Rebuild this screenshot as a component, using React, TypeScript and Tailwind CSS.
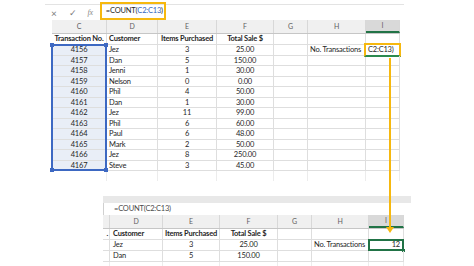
import React from "react";

const sales = [
  { id: "4156", name: "Jez", items: "3", total: "25.00" },
  { id: "4157", name: "Dan", items: "5", total: "150.00" },
  { id: "4158", name: "Jenni", items: "1", total: "30.00" },
  { id: "4159", name: "Nelson", items: "0", total: "0.00" },
  { id: "4160", name: "Phil", items: "4", total: "50.00" },
  { id: "4161", name: "Dan", items: "1", total: "30.00" },
  { id: "4162", name: "Jez", items: "11", total: "99.00" },
  { id: "4163", name: "Phil", items: "6", total: "60.00" },
  { id: "4164", name: "Paul", items: "6", total: "48.00" },
  { id: "4165", name: "Mark", items: "2", total: "50.00" },
  { id: "4166", name: "Jez", items: "8", total: "250.00" },
  { id: "4167", name: "Steve", items: "3", total: "45.00" },
];

const topCols = "grid grid-cols-[55px_51px_59px_57px_34px_58px_34px]";
const bottomCols = "grid grid-cols-[7px_53px_57px_58px_34px_57px_35px]";
const cell = "border-r border-b border-[#dedede] overflow-visible whitespace-nowrap leading-none flex items-center";

function ColHeaders({ cols, letters }: { cols: string; letters: string[] }) {
  return (
    <div className={`${cols} h-[14px] bg-[#f0f0f0] border-b border-[#c6c6c6] text-[#5f5f5f]`}>
      {letters.map((l, i) => (
        <div
          key={i}
          className={`flex items-center justify-center border-r border-[#d8d8d8] text-[7px] ${
            l === "I" ? "bg-[#d9d9d9] border-b-2 border-b-[#217346]" : ""
          }`}
        >
          {l}
        </div>
      ))}
    </div>
  );
}

export default function App() {
  return (
    <div className="relative w-[474px] h-[266px] overflow-hidden bg-white text-[#262626] font-['Lato','Liberation_Sans',sans-serif] text-[7.5px] tracking-[-0.2px]">
      {/* top sheet */}
      <div className="pl-[45px] pt-[4px] w-[404px]">
        <div className="border-t border-[#e3e3e3] h-[16px] flex items-center">
          <span className="ml-[6px] text-[#7a7a7a] text-[10px] leading-none">×</span>
          <span className="ml-[12px] text-[#7a7a7a] text-[9px] leading-none">✓</span>
          <span className="ml-[11px] text-[#8a8a8a] text-[8px] italic font-['Liberation_Serif',serif] leading-none">fx</span>
          <div className="ml-[7px] -mt-[3px] h-[18px] w-[66px] border-2 border-[#f6b80f] flex items-center pl-[4px] leading-none">
            =COUNT(<span className="text-[#2f63c0]">C2:C13</span>)<span className="ml-[1px] w-px h-[10px] bg-black" />
          </div>
        </div>
      </div>

      <div className="relative ml-[52px] w-[348px]">
        <ColHeaders cols={topCols} letters={["C", "D", "E", "F", "G", "H", "I"]} />

        <div className={`${topCols} h-[11px] font-bold`}>
          <div className={`${cell} justify-center`}>Transaction No.</div>
          <div className={`${cell} pl-[2px]`}>Customer</div>
          <div className={`${cell} justify-center`}>Items Purchased</div>
          <div className={`${cell} justify-center`}>Total Sale $</div>
          <div className={cell} />
          <div className={cell} />
          <div className={cell} />
        </div>

        {sales.map((r, i) => (
          <div key={r.id} className={`${topCols} h-[10.5px]`}>
            <div className={`${cell} justify-center bg-[#e9eef7]`}>{r.id}</div>
            <div className={`${cell} pl-[2px]`}>{r.name}</div>
            <div className={`${cell} justify-center`}>{r.items}</div>
            <div className={`${cell} justify-center`}>{r.total}</div>
            <div className={cell} />
            <div className={`${cell} pl-[2px]`}>{i === 0 ? "No. Transactions" : ""}</div>
            <div className={`${cell} relative pl-[2px]`}>
              {i === 0 && (
                <>
                  <span>C2:C13)</span>
                  <div className="absolute -inset-[2px] border-2 border-[#f6b80f] border-b-[#2c8a4f]" />
                </>
              )}
            </div>
          </div>
        ))}

        <div className={`${topCols} h-[10px]`}>
          {Array.from({ length: 7 }).map((_, i) => (
            <div key={i} className="border-r border-[#ececec]" />
          ))}
        </div>

        {/* selection C2:C13 */}
        <div className="absolute left-[-1px] top-[24px] w-[56px] h-[127px] border-2 border-[#3d68c2] pointer-events-none">
          <span className="absolute -left-[3px] -top-[3px] w-[4px] h-[4px] bg-[#3d68c2]" />
          <span className="absolute -right-[3px] -top-[3px] w-[4px] h-[4px] bg-[#3d68c2]" />
          <span className="absolute -left-[3px] -bottom-[3px] w-[4px] h-[4px] bg-[#3d68c2]" />
          <span className="absolute -right-[3px] -bottom-[3px] w-[4px] h-[4px] bg-[#3d68c2]" />
        </div>
      </div>

      {/* bottom sheet */}
      <div className="mt-[15px] ml-[103px] w-[308px]">
        <div className="h-[7px] bg-[#e8e8e8]" />
        <div className="h-[12px] flex items-center pl-[10px] text-[#4a4a4a] border-l border-[#d0d0d0] w-[301px]">
          =COUNT(C2:C13)
        </div>
        <div className="w-[301px]">
          <ColHeaders cols={bottomCols} letters={["", "D", "E", "F", "G", "H", "I"]} />
          <div className={`${bottomCols} h-[11px] font-bold`}>
            <div className={`${cell} justify-end pr-[1px]`}>.</div>
            <div className={`${cell} pl-[3px]`}>Customer</div>
            <div className={`${cell} justify-center`}>Items Purchased</div>
            <div className={`${cell} justify-center`}>Total Sale $</div>
            <div className={cell} />
            <div className={cell} />
            <div className={cell} />
          </div>
          {sales.slice(0, 2).map((r, i) => (
            <div key={r.id} className={`${bottomCols} h-[11px]`}>
              <div className={cell} />
              <div className={`${cell} pl-[3px]`}>{r.name}</div>
              <div className={`${cell} justify-center`}>{r.items}</div>
              <div className={`${cell} justify-center`}>{r.total}</div>
              <div className={cell} />
              <div className={`${cell} pl-[2px]`}>{i === 0 ? "No. Transactions" : ""}</div>
              <div className={`${cell} relative justify-end pr-[3px]`}>
                {i === 0 && (
                  <>
                    12
                    <div className="absolute -inset-px border-2 border-[#217346]" />
                    <span className="absolute -right-[2px] -bottom-[2px] w-[3px] h-[3px] bg-[#217346]" />
                  </>
                )}
              </div>
            </div>
          ))}
          <div className={`${bottomCols} h-[10px]`}>
            {Array.from({ length: 7 }).map((_, i) => (
              <div key={i} className="border-r border-[#ececec]" />
            ))}
          </div>
        </div>
      </div>

      {/* connector from I2 to result cell */}
      <div className="absolute left-[389px] top-[58px] w-[2px] h-[170px] bg-[#f6b80f]" />
      <svg className="absolute left-[385px] top-[227px]" width="10" height="7" viewBox="0 0 10 7">
        <path d="M1 0 L9 0 L5 6 Z" fill="#f6b80f" />
      </svg>
    </div>
  );
}
